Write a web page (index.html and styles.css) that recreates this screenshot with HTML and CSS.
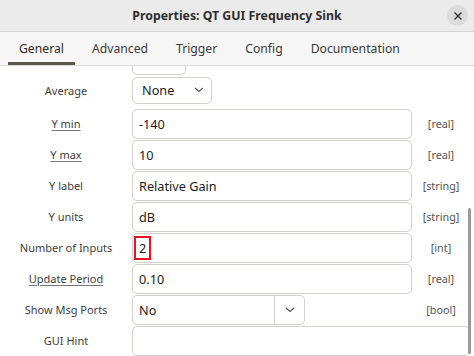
FILE: index.html
```html
<!DOCTYPE html>
<html>
<head>
<meta charset="utf-8">
<link rel="stylesheet" href="styles.css">
</head>
<body>
<div class="window">
  <div class="titlebar">
    <span class="title">Properties: QT GUI Frequency Sink</span>
    <span class="close"><svg width="10" height="10" viewBox="0 0 10 10"><path d="M1.5 1.5 L8.5 8.5 M8.5 1.5 L1.5 8.5" stroke="#333" stroke-width="1.4" fill="none"/></svg></span>
  </div>
  <div class="tabs">
    <span class="tab active">General</span>
    <span class="tab">Advanced</span>
    <span class="tab">Trigger</span>
    <span class="tab">Config</span>
    <span class="tab">Documentation</span>
  </div>
  <div class="content">
    <div class="partial-row"><div class="partial-box"></div></div>
    <div class="row first">
      <div class="label">Average</div>
      <div class="field"><div class="combo small"><span class="val">None</span><span class="chev"><svg width="10" height="6" viewBox="0 0 10 6"><path d="M1 1 L5 4.5 L9 1" stroke="#555" stroke-width="1.2" fill="none"/></svg></span></div></div>
      <div class="type"></div>
    </div>
    <div class="row">
      <div class="label"><u>Y min</u></div>
      <div class="field"><div class="entry">-140</div></div>
      <div class="type">[real]</div>
    </div>
    <div class="row">
      <div class="label"><u>Y max</u></div>
      <div class="field"><div class="entry">10</div></div>
      <div class="type">[real]</div>
    </div>
    <div class="row">
      <div class="label">Y label</div>
      <div class="field"><div class="entry">Relative Gain</div></div>
      <div class="type">[string]</div>
    </div>
    <div class="row">
      <div class="label">Y units</div>
      <div class="field"><div class="entry">dB</div></div>
      <div class="type">[string]</div>
    </div>
    <div class="row">
      <div class="label">Number of Inputs</div>
      <div class="field"><div class="entry"><span class="err">2</span></div></div>
      <div class="type">[int]</div>
    </div>
    <div class="row">
      <div class="label"><u>Update Period</u></div>
      <div class="field"><div class="entry">0.10</div></div>
      <div class="type">[real]</div>
    </div>
    <div class="row">
      <div class="label">Show Msg Ports</div>
      <div class="field"><div class="combo wide"><span class="val">No</span><span class="btn"><svg width="10" height="6" viewBox="0 0 10 6"><path d="M1 1 L5 4.5 L9 1" stroke="#555" stroke-width="1.2" fill="none"/></svg></span></div></div>
      <div class="type">[bool]</div>
    </div>
    <div class="row last">
      <div class="label">GUI Hint</div>
      <div class="field span"><div class="entry"></div></div>
    </div>
    <div class="scrollbar"></div>
  </div>
</div>
</body>
</html>
```
FILE: styles.css
```css
html, body {
  margin: 0;
  padding: 0;
  background: #ffffff;
}
body {
  font-family: "Noto Sans", "Open Sans", sans-serif;
  width: 474px;
  height: 356px;
  overflow: hidden;
}
.window {
  width: 474px;
  height: 356px;
  display: flex;
  flex-direction: column;
  background: #ffffff;
}
.titlebar {
  height: 31px;
  flex: none;
  background: #ebebeb;
  border-bottom: 1px solid #d6d6d6;
  display: flex;
  align-items: center;
  justify-content: center;
  position: relative;
}
.title {
  font-weight: bold;
  font-size: 12.3px;
  color: #2e2e2e;
}
.close {
  position: absolute;
  right: 6px;
  top: 5px;
  width: 21px;
  height: 21px;
  border-radius: 50%;
  background: #dcdcdc;
  display: flex;
  align-items: center;
  justify-content: center;
}
.tabs {
  height: 33px;
  flex: none;
  background: #f6f6f6;
  border-bottom: 1px solid #dadada;
  display: flex;
  align-items: stretch;
  padding-left: 8px;
}
.tab {
  font-size: 12.2px;
  color: #3a3a3a;
  display: flex;
  align-items: center;
  padding: 0 11px;
  margin-right: 6px;
  border-bottom: 3px solid transparent;
  padding-top: 3px;
}
.tab.active {
  border-bottom-color: #5b574c;
  color: #2a2a2a;
}
.content {
  flex: 1;
  position: relative;
  overflow: hidden;
}
.partial-row {
  height: 9px;
  padding-left: 132px;
}
.partial-box {
  width: 52px;
  height: 8px;
  border: 1px solid #d3cfcb;
  border-top: none;
  border-radius: 0 0 5px 5px;
}
.row {
  display: grid;
  grid-template-columns: 132px 280px 58px;
  height: 31px;
  align-items: center;
}
.row.first {
  margin-top: 0;
  margin-bottom: 2px;
}
.label {
  text-align: center;
  font-size: 11px;
  color: #3e3e3e;
}
.label u {
  text-decoration-color: #777;
  text-underline-offset: 2px;
}
.type {
  text-align: center;
  font-size: 10.8px;
  color: #555;
}
.field {
  height: 30px;
  display: flex;
  align-items: stretch;
}
.field.span {
  grid-column: 2 / 4;
}
.entry {
  flex: 1;
  border: 1px solid #d3cfcb;
  border-radius: 5px;
  background: #fff;
  display: flex;
  align-items: center;
  padding-left: 6px;
  font-size: 12.7px;
  color: #1c1c1c;
}
.err {
  border: 2px solid #e0181b;
  padding: 1px 3px;
  line-height: 18px;
  margin-left: -5px;
}
.combo {
  border: 1px solid #d3cfcb;
  border-radius: 5px;
  background: #fff;
  display: flex;
  align-items: center;
  font-size: 12.7px;
  color: #1c1c1c;
}
.combo.small {
  width: 80px;
  height: 27px;
  margin-top: 1px;
  padding-left: 9px;
  box-sizing: border-box;
}
.combo.small .val {
  flex: 1;
}
.combo.small .chev {
  width: 24px;
  display: flex;
  justify-content: center;
}
.combo.wide {
  width: 173px;
  box-sizing: border-box;
  padding-left: 6px;
}
.combo.wide .val {
  flex: 1;
}
.combo.wide .btn {
  width: 29px;
  height: 100%;
  border-left: 1px solid #d3cfcb;
  display: flex;
  align-items: center;
  justify-content: center;
}
.scrollbar {
  position: absolute;
  right: 3px;
  top: 142px;
  width: 3px;
  height: 146px;
  background: #9a9a9a;
  border-radius: 2px;
}
```
